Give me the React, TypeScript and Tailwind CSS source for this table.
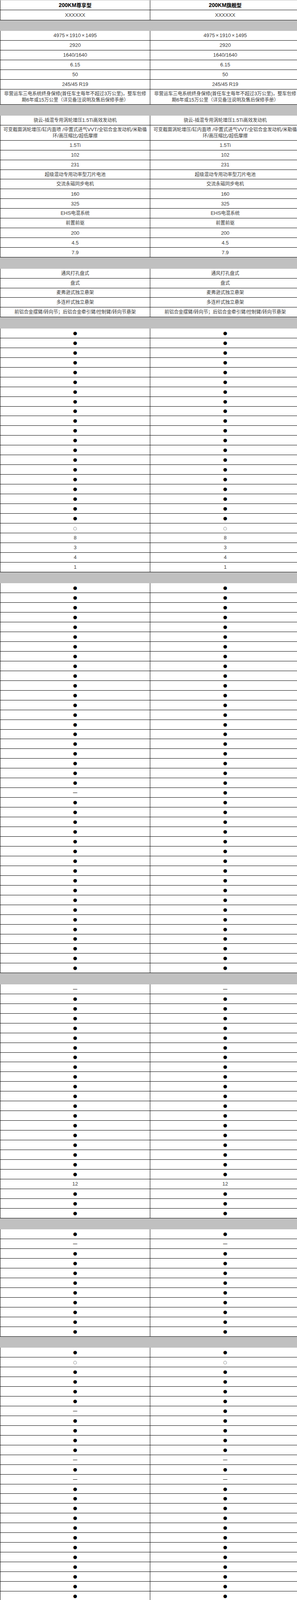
import React from 'react';

type Pair = [string, string];

const D: Pair = ['●', '●'];
const dots = (n: number): Pair[] => Array.from({ length: n }, () => D);

// one grey band per group, then its rows
const groups: Pair[][] = [
  [
    ['4975×1910×1495', '4975×1910×1495'],
    ['2920', '2920'],
    ['1640/1640', '1640/1640'],
    ['6.15', '6.15'],
    ['50', '50'],
    ['245/45 R19', '245/45 R19'],
    [
      '非营运车三电系统终身保修(首任车主每年不超过3万公里)，整车包修\n期6年或15万公里（详见备注说明及售后保修手册）',
      '非营运车三电系统终身保修(首任车主每年不超过3万公里)，整车包修\n期6年或15万公里（详见备注说明及售后保修手册）',
    ],
  ],
  [
    ['骁云-插混专用涡轮增压1.5Ti高效发动机', '骁云-插混专用涡轮增压1.5Ti高效发动机'],
    [
      '可变截面涡轮增压/缸内直喷 /中置式进气VVT/全铝合金发动机/米勒循\n环/高压缩比/超低摩擦',
      '可变截面涡轮增压/缸内直喷 /中置式进气VVT/全铝合金发动机/米勒循\n环/高压缩比/超低摩擦',
    ],
    ['1.5Ti', '1.5Ti'],
    ['102', '102'],
    ['231', '231'],
    ['超级混动专用功率型刀片电池', '超级混动专用功率型刀片电池'],
    ['交流永磁同步电机', '交流永磁同步电机'],
    ['160', '160'],
    ['325', '325'],
    ['EHS电混系统', 'EHS电混系统'],
    ['前置前驱', '前置前驱'],
    ['200', '200'],
    ['4.5', '4.5'],
    ['7.9', '7.9'],
  ],
  [
    ['通风打孔盘式', '通风打孔盘式'],
    ['盘式', '盘式'],
    ['麦弗逊式独立悬架', '麦弗逊式独立悬架'],
    ['多连杆式独立悬架', '多连杆式独立悬架'],
    ['前铝合金摆臂/转向节；后铝合金牵引臂/控制臂/转向节悬架', '前铝合金摆臂/转向节；后铝合金牵引臂/控制臂/转向节悬架'],
  ],
  [...dots(20), ['○', '○'], ['8', '8'], ['3', '3'], ['4', '4'], ['1', '1']],
  [...dots(21), ['—', '●'], ...dots(18)],
  [['—', '—'], ...dots(19), ['12', '12'], ...dots(3)],
  [D, ['—', '—'], ...dots(9)],
  [D, ['○', '○'], ...dots(4), ['—', '●'], ...dots(4), ['—', '—'], D, ['—', '—'], ...dots(16)],
  [...dots(7), ['—', '●'], ...dots(7)],
  [D, ['—', '—'], ...dots(10)],
  [D, D, ['—', '●'], ['●', '—'], ['—', '●'], ['—', '—'], ['●（麒麟棕）', '—'], ['—', '●（麒麟棕）'], ...dots(9)],
];

const WIDE = /[\u3000-\u303f\u4e00-\u9fff\uff00-\uffef]/;

function Txt({ s, head }: { s: string; head?: boolean }) {
  const parts = s.split(/([●—○]|×|[\u3000-\u303f\u4e00-\u9fff\uff00-\uffef]+)/).filter(Boolean);
  return (
    <>
      {parts.map((p, i) => {
        if (p === '●' || p === '—')
          return (
            <span
              key={i}
              className="inline-block w-[12px] text-center text-[12px] text-black [font-family:'DejaVu_Sans',sans-serif]"
            >
              {p}
            </span>
          );
        if (p === '○')
          return (
            <span key={i} className="inline-block w-[12px] text-center text-[11px] text-[#666] [font-family:'DejaVu_Sans',sans-serif]">
              ○
            </span>
          );
        if (p === '×')
          return (
            <span key={i} className="inline-block w-[12px] text-center">
              ×
            </span>
          );
        if (WIDE.test(p))
          return (
            <span key={i} className={head ? 'text-[13px]' : 'text-[12px]'}>
              {p}
            </span>
          );
        return <span key={i}>{p}</span>;
      })}
    </>
  );
}

function Cell({ v, first, head }: { v: string; first?: boolean; head?: boolean }) {
  const lines = v.split('\n');
  return (
    <div
      className={`w-[385px] shrink-0 flex flex-col items-center justify-center px-[5px] border-r border-black ${
        first ? 'border-l' : ''
      } ${head ? 'text-[14px] font-bold text-black' : 'text-[13px] text-[#3a3a3a]'}`}
    >
      {lines.map((l, i) => (
        <div key={i} className="leading-[15px] whitespace-nowrap">
          <Txt s={l} head={head} />
        </div>
      ))}
    </div>
  );
}

function Row({ r, tall, head, h }: { r: Pair; tall?: boolean; head?: boolean; h?: string }) {
  return (
    <div className={`flex shrink-0 border-b border-black ${h ? h : tall ? 'h-[39px]' : 'h-[24.96px]'}`}>
      <Cell v={r[0]} first head={head} />
      <Cell v={r[1]} head={head} />
    </div>
  );
}

export default function App() {
  return (
    <div className="w-[761px] h-[5396px] overflow-hidden bg-white [font-family:'Liberation_Sans','Noto_Sans_CJK_SC',sans-serif]">
      <div className="w-[770px] h-full flex flex-col">
        <div className="h-[1px] shrink-0 bg-[#c0c0c0]" />
        <Row r={['200KM尊享型', '200KM旗舰型']} head h="h-[25px]" />
        <Row r={['XXXXXX', 'XXXXXX']} h="h-[26px]" />
        {groups.map((g, gi) => (
          <React.Fragment key={gi}>
            <div
              className={`shrink-0 bg-[#c0c0c0] ${gi === 0 ? 'h-[27px]' : gi === 1 ? 'h-[28px]' : 'h-[28.5px]'}`}
            />
            {g.map((r, ri) => (
              <Row key={ri} r={r} tall={r[0].includes('\n')} />
            ))}
          </React.Fragment>
        ))}
        {/* last band, cut by the bottom of the frame */}
        <div className="flex-1 min-h-0 bg-[#c0c0c0] border-b border-black" />
        <div className="h-[1px] shrink-0" />
      </div>
    </div>
  );
}
